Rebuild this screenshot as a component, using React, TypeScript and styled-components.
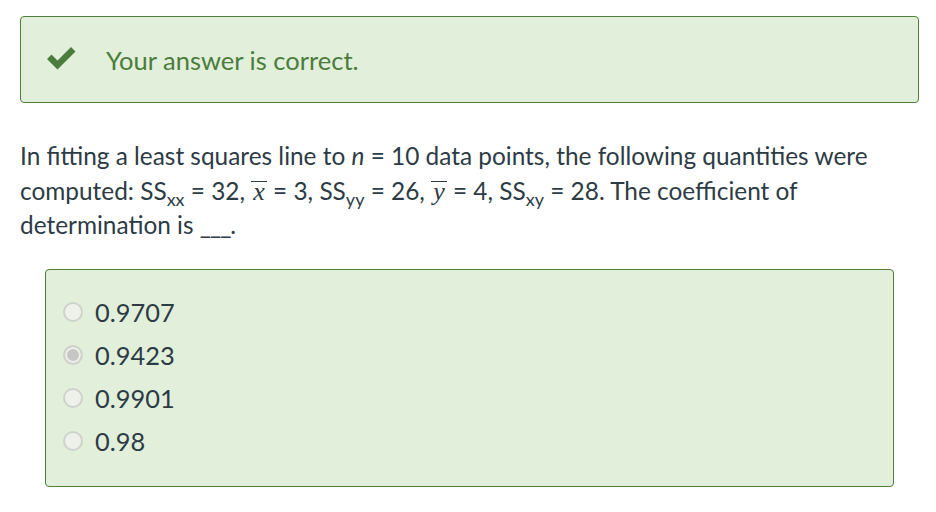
import React from "react";
import styled, { createGlobalStyle } from "styled-components";

const Global = createGlobalStyle`
  body {
    margin: 0;
    background: #fff;
    font-family: Lato, "Open Sans", sans-serif;
  }
`;

const options = [
  { label: "0.9707", checked: false },
  { label: "0.9423", checked: true },
  { label: "0.9901", checked: false },
  { label: "0.98", checked: false },
];

const App = () => {
  return (
    <>
      <Global />
      <Page>
        <Banner>
          <Check viewBox="0 0 30 22">
            <path d="M0 12 L4.5 7.5 L10.5 13.5 L24 0 L28.5 4.5 L10.5 22.5 Z" fill="#4b7c3d" />
          </Check>
          <BannerText>Your answer is correct.</BannerText>
        </Banner>
        <Question>
          In fitting a least squares line to <em>n</em> = 10 data points, the
          following quantities were computed: SS<Sub>xx</Sub> = 32,{" "}
          <Bar>x</Bar> = 3, SS<Sub>yy</Sub> = 26, <Bar>y</Bar> = 4, SS
          <Sub>xy</Sub> = 28. The coefficient of determination is{" "}
          <Blank>___</Blank>.
        </Question>
        <Answers>
          {options.map((o) => (
            <Option key={o.label}>
              <Radio checked={o.checked} />
              <span>{o.label}</span>
            </Option>
          ))}
        </Answers>
      </Page>
    </>
  );
};

export default App;

const Page = styled.div`
  width: 899px;
  padding: 16px 0 0 20px;
`;

const Banner = styled.div`
  display: flex;
  align-items: center;
  height: 87px;
  box-sizing: border-box;
  border: 1px solid #4e7f3f;
  border-radius: 4px;
  background: #e2efda;
  padding-left: 26px;
`;

const Check = styled.svg`
  width: 30px;
  height: 22px;
  margin-right: 29px;
  margin-top: -3px;
  overflow: visible;
`;

const BannerText = styled.div`
  font-size: 25.5px;
  color: #4b7c3d;
  margin-top: 1px;
`;

const Question = styled.div`
  margin-top: 36px;
  font-size: 24.4px;
  line-height: 34.5px;
  color: #2d3b45;
  padding-right: 20px;

  em {
    font-style: italic;
  }
`;

const Sub = styled.sub`
  font-size: 18px;
  vertical-align: -6px;
  line-height: 0;
`;

const Bar = styled.span`
  font-family: "Liberation Serif", serif;
  font-style: italic;
  font-size: 26px;
  display: inline-block;
  line-height: 20px;
  padding: 0 2px;
  border-top: 1.5px solid #2d3b45;
`;

const Blank = styled.span`
  letter-spacing: -1px;
`;

const Answers = styled.div`
  margin: 26px 25px 0 25px;
  border: 1px solid #4e7f3f;
  border-radius: 4px;
  background: #e2efda;
  padding: 21px 0 23px 17px;
  height: 218px;
  box-sizing: border-box;
`;

const Option = styled.div`
  display: flex;
  align-items: center;
  height: 43px;
  font-size: 25.4px;
  color: #2d3b45;
`;

const Radio = styled.span<{ checked: boolean }>`
  width: 20px;
  height: 20px;
  box-sizing: border-box;
  border-radius: 50%;
  border: 2px solid #cfd2cc;
  background: ${(p) => (p.checked ? "#c6c7c4" : "#eef0ea")};
  box-shadow: ${(p) => (p.checked ? "inset 0 0 0 2px #eef0ea" : "none")};
  margin-right: 12px;
`;
